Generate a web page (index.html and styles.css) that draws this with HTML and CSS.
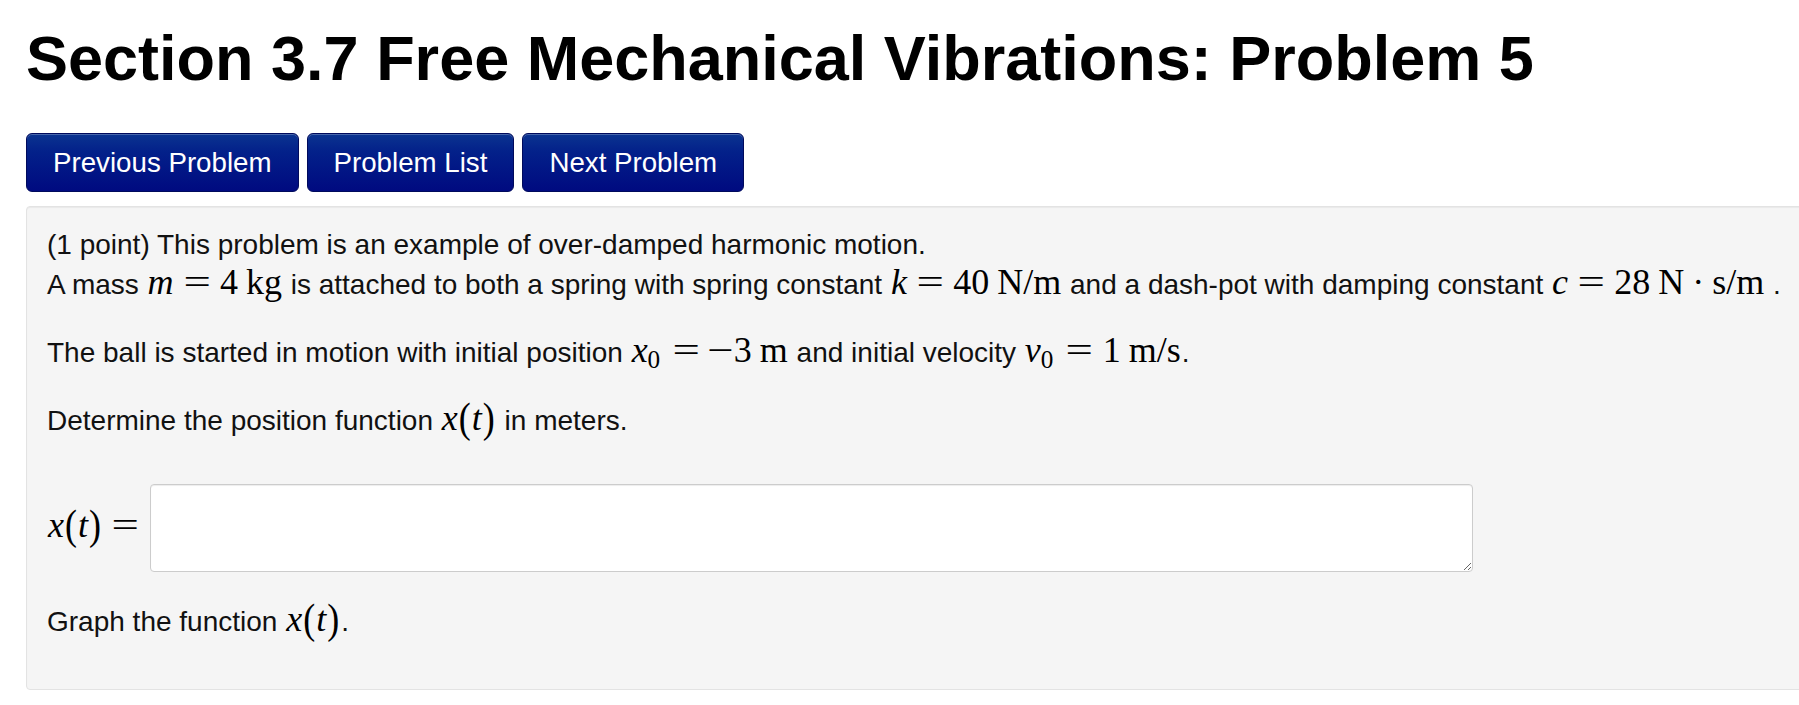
FILE: index.html
```html
<!DOCTYPE html>
<html>
<head>
<meta charset="utf-8">
<title>Section 3.7 Free Mechanical Vibrations: Problem 5</title>
<link rel="stylesheet" href="styles.css">
</head>
<body>
<div class="page">
  <h1 class="title">Section 3.7 Free Mechanical Vibrations: Problem 5</h1>
  <div class="nav">
    <a class="btn">Previous Problem</a>
    <a class="btn">Problem List</a>
    <a class="btn">Next Problem</a>
  </div>
  <div class="well">
    <p class="para">(1 point) This problem is an example of over-damped harmonic motion.<br>A mass <span class="math"><i>m</i><span class="rel">=</span>4<span class="th"></span>kg</span> is attached to both a spring with spring constant <span class="math"><i>k</i><span class="rel">=</span>40<span class="th"></span>N/m</span> and a dash-pot with damping constant <span class="math"><i>c</i><span class="rel">=</span>28<span class="th"></span>N<span class="dot">·</span>s/m</span> .</p>
    <p class="para">The ball is started in motion with initial position <span class="math"><i>x</i><span class="sub">0</span><span class="rel">=</span><span class="minus">−</span>3<span class="th"></span>m</span> and initial velocity <span class="math"><i>v</i><span class="sub">0</span><span class="rel">=</span>1<span class="th"></span>m/s</span>.</p>
    <p class="para">Determine the position function <span class="math"><i>x</i><span class="par">(</span><i>t</i><span class="par">)</span></span> in meters.</p>
    <div class="answer">
      <span class="label"><span class="math"><i>x</i><span class="par">(</span><i>t</i><span class="par">)</span><span class="rel">=</span></span></span>
      <textarea class="box"></textarea>
    </div>
    <p class="para">Graph the function <span class="math"><i>x</i><span class="par">(</span><i>t</i><span class="par">)</span></span>.</p>
  </div>
</div>
</body>
</html>
```

FILE: styles.css
```css
html, body {
  margin: 0;
  padding: 0;
  overflow: hidden;
  background: #fff;
}
.page {
  padding-left: 26px;
  font-family: "Liberation Sans", Arial, sans-serif;
  color: #111;
}
.title {
  margin: 22px 0 0;
  font-size: 63px;
  line-height: 72px;
  font-weight: bold;
  color: #000;
  white-space: nowrap;
}
.nav {
  margin-top: 39px;
  display: flex;
  gap: 8px;
}
.btn {
  display: block;
  height: 59px;
  box-sizing: border-box;
  padding: 0 26px;
  border: 1px solid #000a5c;
  border-radius: 6px;
  background: linear-gradient(to bottom, #0b3490 0%, #03218a 30%, #000a80 100%);
  box-shadow: inset 0 1px 0 rgba(255,255,255,0.25);
  color: #fff;
  font-size: 27.7px;
  line-height: 57px;
  white-space: nowrap;
}
.well {
  margin-top: 14px;
  width: 1840px;
  box-sizing: border-box;
  background: #f5f5f5;
  border: 1px solid #e3e3e3;
  border-radius: 4px;
  box-shadow: inset 0 1px 1px rgba(0,0,0,0.05);
  padding: 18px 19px 19px 20px;
  font-size: 28px;
  line-height: 40px;
}
.para {
  margin: 0 0 28px;
  white-space: nowrap;
}
.math {
  font-family: "Liberation Serif", "Times New Roman", serif;
  font-size: 36px;
  line-height: 0;
  color: #000;
  margin: 0 1px;
}
.math i {
  font-style: italic;
}
.rel {
  display: inline-block;
  margin: 0 13px;
  transform: scaleX(1.35);
}
.minus {
  display: inline-block;
  transform: scaleX(1.3);
  margin-right: 4px;
}
.par {
  display: inline-block;
  transform: scaleY(1.15);
  margin: 0 1px;
}
.th {
  display: inline-block;
  width: 8px;
}
.dot {
  margin: 0 8px;
}
.sub {
  font-size: 0.7em;
  vertical-align: -0.25em;
  margin-right: 3px;
}
.answer {
  display: flex;
  align-items: center;
  margin: 43px 0 30px;
}
.label {
  width: 103px;
  flex: none;
  white-space: nowrap;
}
.box {
  display: block;
  width: 1323px;
  height: 88px;
  box-sizing: border-box;
  margin: 0;
  border: 1px solid #ccc;
  border-radius: 4px;
  background: #fff;
  box-shadow: inset 0 1px 1px rgba(0,0,0,0.075);
  font-family: "Liberation Sans", Arial, sans-serif;
  font-size: 20px;
}
```
